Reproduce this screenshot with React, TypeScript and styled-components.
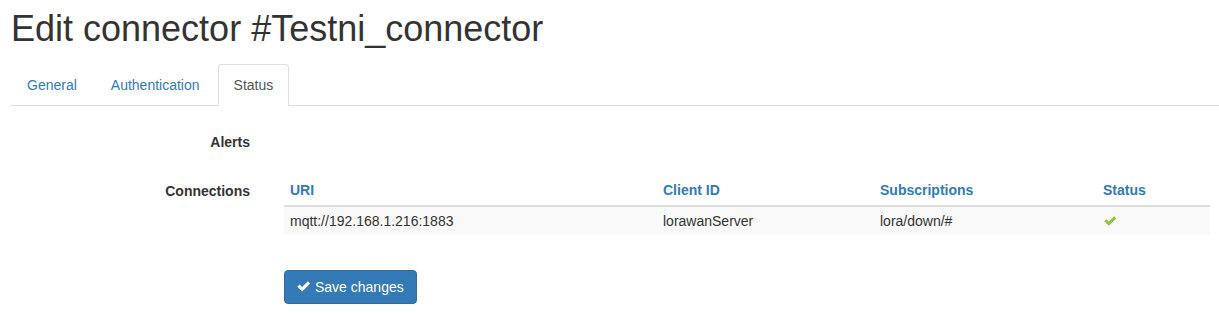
import styled, { createGlobalStyle } from 'styled-components'

const GlobalStyle = createGlobalStyle`
  html, body {
    margin: 0;
    padding: 0;
    background: #fff;
  }
  body {
    font-family: "Liberation Sans", Arial, sans-serif;
    font-size: 14px;
    line-height: 20px;
    color: #333;
  }
`

const Page = styled.div`
  padding: 9px 0 0 11px;
`

const Title = styled.h1`
  margin: 0 0 15px;
  font-size: 36px;
  line-height: 39.6px;
  font-weight: 400;
  color: #333;
`

const Tabs = styled.ul`
  display: flex;
  list-style: none;
  margin: 0;
  padding: 0;
  border-bottom: 1px solid #ddd;
`

const Tab = styled.li`
  margin-bottom: -1px;
`

const TabLink = styled.a<{ $active?: boolean }>`
  display: block;
  margin-right: 2px;
  padding: 10px 15px;
  line-height: 20px;
  border: 1px solid ${p => (p.$active ? '#ddd' : 'transparent')};
  border-bottom-color: transparent;
  border-radius: 4px 4px 0 0;
  background: ${p => (p.$active ? '#fff' : 'transparent')};
  color: ${p => (p.$active ? '#555' : '#337ab7')};
  text-decoration: none;
  cursor: pointer;
`

const Form = styled.div`
  padding: 19px 9px 0 0;
`

const Group = styled.div<{ $minHeight?: number, $offset?: number }>`
  display: grid;
  grid-template-columns: 239px 1fr;
  column-gap: 34px;
  margin-bottom: 15px;
  padding-top: ${p => p.$offset ?? 0}px;
  min-height: ${p => p.$minHeight ?? 0}px;
`

const Label = styled.label`
  padding-top: 7px;
  text-align: right;
  font-weight: 700;
  color: #333;
`

const Table = styled.table`
  width: 100%;
  table-layout: fixed;
  border-collapse: collapse;
  border-spacing: 0;
  margin-top: 1px;

  th, td {
    padding: 4px 6px;
    line-height: 20px;
    text-align: left;
    vertical-align: top;
  }
  th {
    padding-top: 5px;
    padding-bottom: 5px;
    font-weight: 700;
    color: #337ab7;
    border-bottom: 2px solid #ddd;
  }
  tbody tr:nth-child(odd) td {
    background: #f9f9f9;
  }
`

const CheckIcon = ({ color, size = 13 }: { color: string, size?: number }) => (
  <svg width={size} height={size * 0.8} viewBox="0 0 14 11" style={{ display: 'inline-block', verticalAlign: '-1px' }}>
    <path d="M0.3 5.6 L2.6 3.3 L5.2 5.9 L10.9 0.2 L13.2 2.5 L5.2 10.5 Z" fill={color} />
  </svg>
)

const StatusCell = styled.td`
  padding-left: 7px !important;
`

const Button = styled.button`
  display: inline-flex;
  align-items: center;
  gap: 4px;
  padding: 6px 12px;
  font-family: "Liberation Sans", Arial, sans-serif;
  font-size: 14px;
  line-height: 20px;
  color: #fff;
  background: #337ab7;
  border: 1px solid #2e6da4;
  border-radius: 4px;
  cursor: pointer;
`

const connections = [
  { uri: 'mqtt://192.168.1.216:1883', clientId: 'lorawanServer', subs: 'lora/down/#', ok: true },
]

export default function App() {
  return (
    <Page>
      <GlobalStyle />
      <Title>Edit connector #Testni_connector</Title>
      <Tabs>
        <Tab><TabLink>General</TabLink></Tab>
        <Tab><TabLink>Authentication</TabLink></Tab>
        <Tab><TabLink $active>Status</TabLink></Tab>
      </Tabs>
      <Form>
        <Group $minHeight={34}>
          <Label>Alerts</Label>
          <div />
        </Group>
        <Group>
          <Label>Connections</Label>
          <Table>
            <colgroup>
              <col style={{ width: 373 }} />
              <col style={{ width: 217 }} />
              <col style={{ width: 223 }} />
              <col />
            </colgroup>
            <thead>
              <tr>
                <th>URI</th>
                <th>Client ID</th>
                <th>Subscriptions</th>
                <th>Status</th>
              </tr>
            </thead>
            <tbody>
              {connections.map(c => (
                <tr key={c.uri}>
                  <td>{c.uri}</td>
                  <td>{c.clientId}</td>
                  <td>{c.subs}</td>
                  <StatusCell>{c.ok && <CheckIcon color="#8cc63f" />}</StatusCell>
                </tr>
              ))}
            </tbody>
          </Table>
        </Group>
        <Group $offset={20}>
          <div />
          <div>
            <Button><CheckIcon color="#fff" size={14} />Save changes</Button>
          </div>
        </Group>
      </Form>
    </Page>
  )
}
